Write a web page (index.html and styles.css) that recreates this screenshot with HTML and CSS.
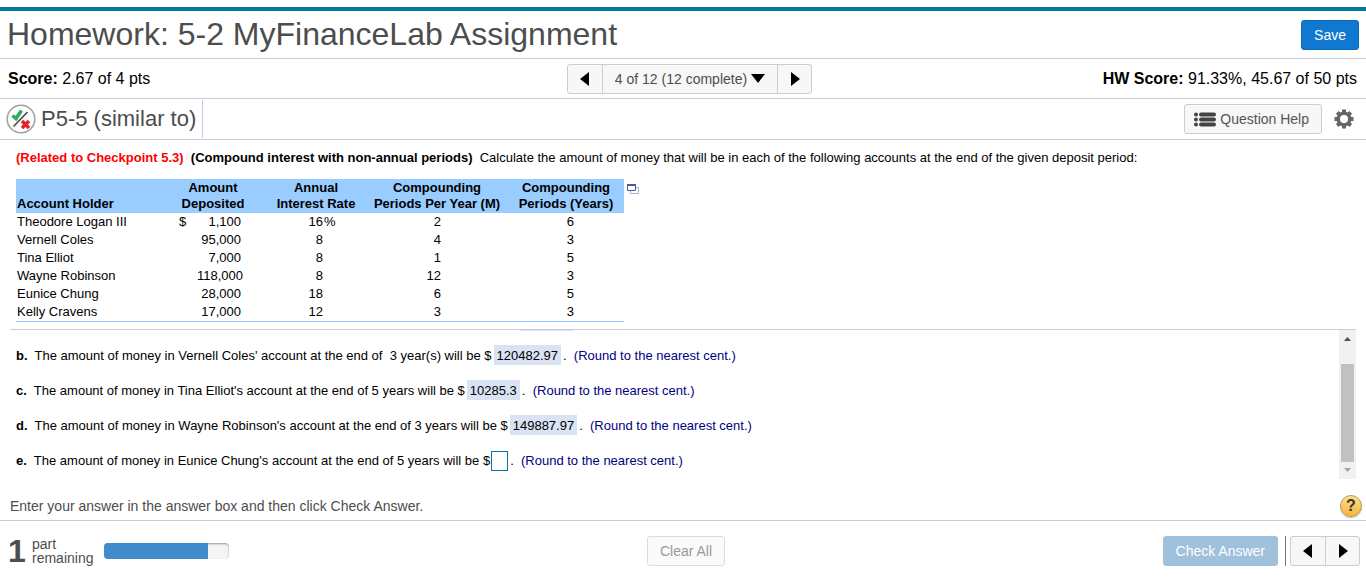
FILE: index.html
```html
<!DOCTYPE html>
<html lang="en">
<head>
  <meta charset="UTF-8" />
  <meta name="viewport" content="width=device-width, initial-scale=1.0" />
  <title>Homework: 5-2 MyFinanceLab Assignment</title>
  <link rel="stylesheet" href="styles.css">
</head>
<body>
  <header class="title-bar">
    <h1>Homework: 5-2 MyFinanceLab Assignment</h1>
    <button class="btn btn-primary" type="button">Save</button>
  </header>

  <div class="score-bar">
    <p><b>Score:</b> 2.67 of 4 pts</p>
    <nav class="pager">
      <button class="pager-arrow" type="button" aria-label="Previous question">
        <svg width="10" height="14"><path d="M0 7L9 0V14Z" /></svg>
      </button>
      <button class="pager-list" type="button">4 of 12 (12 complete)
        <svg width="14" height="9"><path d="M0 0H14L7 9Z" /></svg>
      </button>
      <button class="pager-arrow" type="button" aria-label="Next question">
        <svg width="10" height="14"><path d="M10 7L1 0V14Z" /></svg>
      </button>
    </nav>
    <p class="hw-score"><b>HW Score:</b> 91.33%, 45.67 of 50 pts</p>
  </div>

  <div class="question-bar">
    <h2>
      <svg width="30" height="30" viewBox="0 0 30 30">
        <circle cx="15" cy="15" r="13.8" fill="#fff" stroke="#a2a2a2" stroke-width="1.6" />
        <path d="M6.5 11.5L10 14.500L15.500 6.500" fill="none" stroke="#27ae60" stroke-width="3.600" />
        <path d="M7.500 22.500L21.500 8" stroke="#444" stroke-width="1.600" />
        <path d="M16 17L23 24M23 17L16 24" stroke="#e0262d" stroke-width="3.600" />
      </svg>
      P5-5 (similar to)
    </h2>
    <div class="question-tools">
      <button class="btn btn-help" type="button">
        <svg width="22" height="15" fill="#444">
          <circle cx="2" cy="2.500" r="2" /><circle cx="2" cy="7.500" r="2" /><circle cx="2" cy="12.500" r="2" />
          <rect x="5" y="0.500" width="17" height="4" rx="2" />
          <rect x="5" y="5.500" width="17" height="4" rx="2" />
          <rect x="5" y="10.500" width="17" height="4" rx="2" />
        </svg>
        Question Help
      </button>
      <button class="icon-btn" type="button" aria-label="Settings">
        <svg width="20" height="20" viewBox="0 0 20 20">
          <g stroke="#666" stroke-width="4">
            <path d="M10 0.500V19.500M0.500 10H19.500M3.300 3.300L16.700 16.700M16.700 3.300L3.300 16.700" />
          </g>
          <circle cx="10" cy="10" r="5.500" fill="#fff" stroke="#666" stroke-width="4" />
          <circle cx="10" cy="10" r="4" fill="#fff" />
        </svg>
      </button>
    </div>
  </div>

  <main>
    <section class="problem">
      <p><b class="related">(Related to Checkpoint 5.3)</b>&nbsp; <b>(Compound interest with non-annual periods)</b>&nbsp; Calculate the amount of money that will be in each of the following accounts at the end of the given deposit period:</p>
      <div class="data">
        <table>
          <colgroup>
            <col class="col-holder"><col class="col-sign"><col class="col-amount">
            <col class="col-rate"><col class="col-percent"><col class="col-year"><col class="col-years">
          </colgroup>
          <thead>
            <tr>
              <th class="name">Account Holder</th>
              <th colspan="2">Amount<br>Deposited</th>
              <th colspan="2">Annual<br>Interest Rate</th>
              <th>Compounding<br>Periods Per Year (M)</th>
              <th class="years-head">Compounding<br>Periods (Years)</th>
            </tr>
          </thead>
          <tbody>
            <tr><td class="name">Theodore Logan III</td><td class="sign">$</td><td class="amount">1,100</td><td>16</td><td class="percent">%</td><td class="year">2</td><td class="years">6</td></tr>
            <tr><td class="name">Vernell Coles</td><td></td><td class="amount">95,000</td><td>8</td><td></td><td class="year">4</td><td class="years">3</td></tr>
            <tr><td class="name">Tina Elliot</td><td></td><td class="amount">7,000</td><td>8</td><td></td><td class="year">1</td><td class="years">5</td></tr>
            <tr><td class="name">Wayne Robinson</td><td></td><td class="amount">118,000</td><td>8</td><td></td><td class="year">12</td><td class="years">3</td></tr>
            <tr><td class="name">Eunice Chung</td><td></td><td class="amount">28,000</td><td>18</td><td></td><td class="year">6</td><td class="years">5</td></tr>
            <tr><td class="name">Kelly Cravens</td><td></td><td class="amount">17,000</td><td>12</td><td></td><td class="year">3</td><td class="years">3</td></tr>
          </tbody>
        </table>
        <button class="icon-btn popout" type="button" aria-label="Open data table">
          <svg width="12" height="10" fill="none">
            <path d="M3.500 7V9.500H11.500V3.500H9" stroke="#aab0dc" />
            <path d="M0.500 1V6.500H8.500V1" fill="#fff" stroke="#4a57a8" />
            <path d="M0 1H9" stroke="#4a57a8" stroke-width="2" />
          </svg>
        </button>
      </div>
    </section>

    <section class="answers">
      <div class="answer-list">
        <div class="answer-edge"></div>
        <p><b>b.</b>&nbsp; The amount of money in Vernell Coles' account at the end of &nbsp;3 year(s) will be $<span class="filled">120482.97</span>.&nbsp; <span class="hint">(Round to the nearest cent.)</span></p>
        <p><b>c.</b>&nbsp; The amount of money in Tina Elliot's account at the end of 5 years will be $<span class="filled">10285.3</span>.&nbsp; <span class="hint">(Round to the nearest cent.)</span></p>
        <p><b>d.</b>&nbsp; The amount of money in Wayne Robinson's account at the end of 3 years will be $<span class="filled">149887.97</span>.&nbsp; <span class="hint">(Round to the nearest cent.)</span></p>
        <p><b>e.</b>&nbsp; <label for="answer-e">The amount of money in Eunice Chung's account at the end of 5 years will be $</label><input id="answer-e" type="text">.&nbsp; <span class="hint">(Round to the nearest cent.)</span></p>
      </div>
      <div class="scrollbar">
        <svg width="7" height="4" fill="#505050"><path d="M0 4L3.500 0L7 4Z" /></svg>
        <div class="thumb"></div>
        <svg width="7" height="4" fill="#a3a3a3"><path d="M0 0L3.500 4L7 0Z" /></svg>
      </div>
    </section>
  </main>

  <div class="instruction">
    <p>Enter your answer in the answer box and then click Check Answer.</p>
    <button class="help" type="button" aria-label="Help">?</button>
  </div>

  <footer>
    <div class="remaining">
      <strong>1</strong>
      <span>part<br>remaining</span>
      <div class="progress"><div class="progress-fill"></div></div>
    </div>
    <button class="btn btn-clear" type="button">Clear All</button>
    <div class="footer-actions">
      <button class="btn btn-check" type="button">Check Answer</button>
      <div class="pager">
        <button class="pager-arrow" type="button" aria-label="Previous part">
          <svg width="10" height="14"><path d="M0 7L9 0V14Z" /></svg>
        </button>
        <button class="pager-arrow" type="button" aria-label="Next part">
          <svg width="10" height="14"><path d="M10 7L1 0V14Z" /></svg>
        </button>
      </div>
    </div>
  </footer>
</body>
</html>
```
FILE: styles.css
```css
* {
  box-sizing: border-box;
}

body {
  margin: 0;
  padding-top: 7px;
  background: #fff;
  color: #000;
  font-family: "Liberation Sans", Arial, sans-serif;
  font-size: 13px;
}

h1,
h2,
p {
  margin: 0;
  font-weight: normal;
}

button,
input {
  font-family: inherit;
}

svg {
  display: block;
  flex: none;
}

.title-bar {
  display: flex;
  justify-content: space-between;
  align-items: center;
  height: 52px;
  padding: 0 7px;
  border-top: 4px solid #007a9c;
  border-bottom: 1px solid #c8ccdc;
}

h1 {
  padding-bottom: 2px;
  color: #4d4d4d;
  font-size: 32px;
  line-height: 42px;
}

.btn {
  display: flex;
  align-items: center;
  justify-content: center;
  gap: 4px;
  height: 30px;
  padding: 0 12px;
  border: 1px solid #ccc;
  border-radius: 3px;
  background: #f7f7f7;
  color: #555;
  font-size: 14px;
}

.btn-primary {
  border-color: #0d6cb8;
  background: #1079cf;
  color: #fff;
}

.btn-help {
  padding-left: 9px;
}

.score-bar {
  display: grid;
  grid-template-columns: 1fr auto 1fr;
  align-items: center;
  height: 40px;
  padding: 0 9px 0 8px;
  border-bottom: 1px solid #c8ccdc;
  font-size: 16px;
}

.score-bar .pager {
  margin-left: 14px;
}

.hw-score {
  text-align: right;
}

.pager {
  display: flex;
  height: 30px;
  border: 1px solid #ccc;
  border-radius: 3px;
  background: #f7f7f7;
}

.pager button {
  display: flex;
  align-items: center;
  justify-content: center;
  gap: 4px;
  padding: 0 12px;
  border: 0;
  background: none;
  color: #4d4d4d;
  font-size: 14px;
}

.pager button + button {
  border-left: 1px solid #ccc;
}

.pager .pager-arrow {
  width: 34px;
}

.question-bar {
  display: flex;
  justify-content: space-between;
  align-items: center;
  height: 41px;
  padding: 0 12px 0 6px;
  border-bottom: 1px solid #c8ccdc;
}

h2 {
  display: flex;
  align-items: center;
  gap: 5px;
  height: 38px;
  padding-right: 6px;
  border-right: 1px solid #c8ccdc;
  color: #4d4d4d;
  font-size: 22px;
}

.question-tools {
  display: flex;
  align-items: center;
  gap: 12px;
}

.icon-btn {
  padding: 0;
  border: 0;
  background: none;
}

main {
  margin: 0 10px;
}

.problem {
  padding: 9px 6px 7px;
  border-bottom: 1px solid #c8ccdc;
}

.problem p {
  line-height: 18px;
}

.related {
  color: #f00;
}

.data {
  display: flex;
  align-items: flex-start;
  gap: 3px;
  margin-top: 12px;
}

table {
  width: 608px;
  table-layout: fixed;
  border-collapse: collapse;
  border-bottom: 1px solid #99ccff;
}

.col-holder { width: 147px; }
.col-sign { width: 34px; }
.col-amount { width: 66px; }
.col-rate { width: 60px; }
.col-percent { width: 46px; }
.col-year { width: 136px; }
.col-years { width: 119px; }

th {
  padding: 1px 0;
  background: #99ccff;
  line-height: 16px;
  vertical-align: bottom;
}

td {
  padding: 0;
  line-height: 18px;
  text-align: right;
}

.name {
  padding-left: 1px;
  text-align: left;
}

.sign {
  padding-left: 16px;
  text-align: left;
}

.amount {
  padding-right: 22px;
}

.percent {
  padding-left: 1px;
  text-align: left;
}

.year {
  padding-right: 64px;
}

.years {
  padding-right: 50px;
}

.years-head {
  padding-left: 3px;
}

.popout {
  margin-top: 5px;
}

.answers {
  display: flex;
  justify-content: space-between;
}

.answer-list {
  padding: 0 6px;
}

/* bottom of the answer box that is scrolled out of view */
.answer-edge {
  width: 53px;
  height: 1px;
  margin: 0 0 7px 504px;
  background: #dae3f3;
}

.answer-list p {
  line-height: 35px;
}

.filled {
  margin: 0 2px;
  padding: 3px 3px 2px;
  background: #dae3f3;
}

.hint {
  color: #000080;
}

.answer-list input {
  width: 17px;
  height: 20px;
  margin: 0 2px 2px 1px;
  padding: 0;
  border: 1px solid #007a9c;
  vertical-align: middle;
}

.scrollbar {
  display: flex;
  flex-direction: column;
  align-items: center;
  width: 17px;
  height: 149px;
  padding: 7px 0;
  background: #f1f1f1;
}

.thumb {
  width: 13px;
  height: 98px;
  margin: 23px 0 6px;
  background: #c1c1c1;
}

.instruction {
  display: flex;
  justify-content: space-between;
  align-items: flex-end;
  height: 42px;
  padding: 0 4px 0 10px;
  border-bottom: 1px solid #c8ccdc;
  color: #4d4d4d;
  font-size: 14px;
}

.instruction p {
  line-height: 28px;
}

.help {
  width: 22px;
  height: 22px;
  margin-bottom: 3px;
  padding: 0;
  border: 1px solid #c19a4c;
  border-radius: 50%;
  background: linear-gradient(#fde08a, #f3b63d);
  box-shadow: 0 1px 1px #bbb;
  color: #333;
  font-size: 16px;
  font-weight: bold;
  line-height: 20px;
}

footer {
  display: grid;
  grid-template-columns: 1fr auto 1fr;
  align-items: center;
  height: 60px;
  padding: 0 6px 0 8px;
}

.remaining {
  display: flex;
  align-items: center;
  color: #4d4d4d;
  font-size: 14px;
  line-height: 14px;
}

.remaining strong {
  width: 24px;
  font-size: 32px;
  line-height: 32px;
}

.progress {
  width: 125px;
  height: 16px;
  margin-left: 11px;
  overflow: hidden;
  border-radius: 4px;
  background: #f5f5f5;
  box-shadow: inset 0 1px 2px #999;
}

.progress-fill {
  width: 83%;
  height: 100%;
  background: #428bca;
}

.btn-clear {
  margin-left: 4px;
  border-color: #ddd;
  background: #fafafa;
  color: #999;
}

.footer-actions {
  display: flex;
  justify-content: flex-end;
}

.btn-check {
  margin-right: 7px;
  border-color: #9fc1dc;
  background: #9fc1dc;
  color: #fff;
}

.footer-actions .pager {
  padding-left: 0;
  margin-left: 4px;
  order: 2;
}

/* divider between the check button and the part pager */
.footer-actions::after {
  content: "";
  order: 1;
  border-left: 1px solid #777;
}
```
